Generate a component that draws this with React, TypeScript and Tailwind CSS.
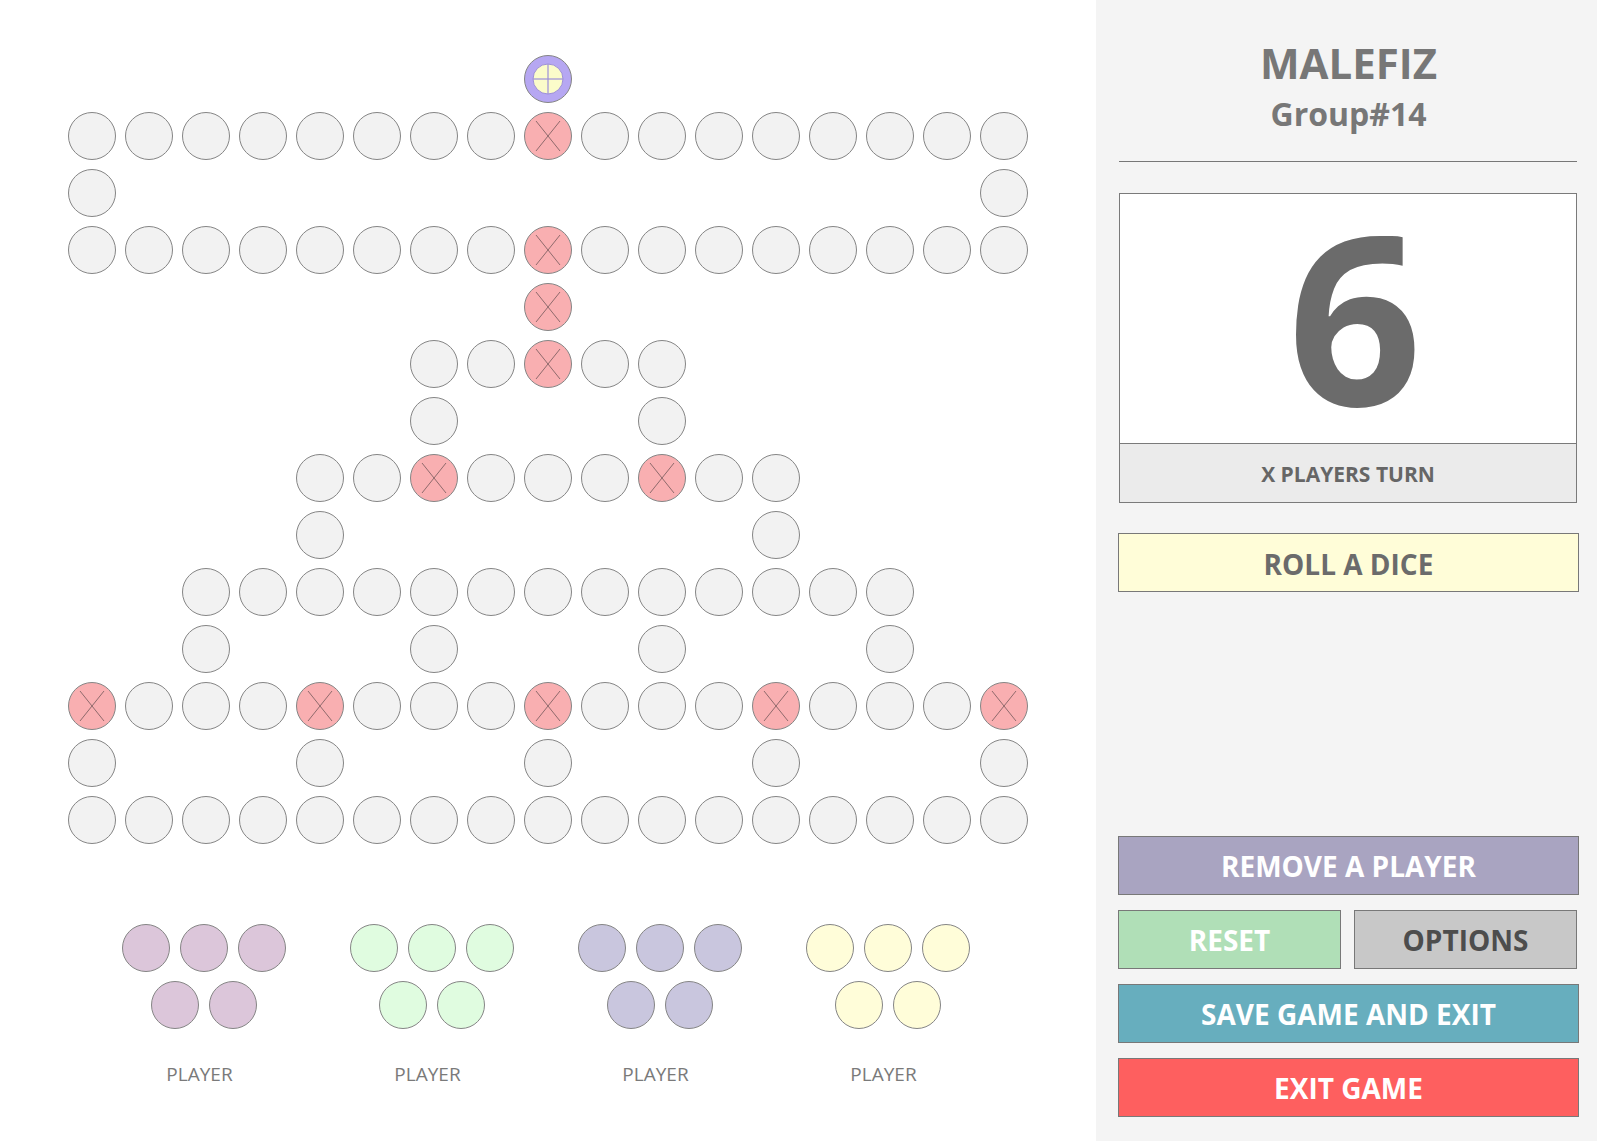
import React from "react";

// board layout, one string per row: . empty, o field, x blocker, G goal
const BOARD = [
  "........G........",
  "ooooooooxoooooooo",
  "o...............o",
  "ooooooooxoooooooo",
  "........x........",
  "......ooxoo......",
  "......o...o......",
  "....ooxoooxoo....",
  "....o.......o....",
  "..ooooooooooooo..",
  "..o...o...o...o..",
  "xoooxoooxoooxooox",
  "o...o...o...o...o",
  "ooooooooooooooooo",
];

const players = [
  { name: "PLAYER", piece: "bg-[#dcc6da]" },
  { name: "PLAYER", piece: "bg-[#e0fce0]" },
  { name: "PLAYER", piece: "bg-[#c9c6de]" },
  { name: "PLAYER", piece: "bg-[#fffdd9]" },
];

const Field = () => (
  <div className="h-12 w-12 rounded-full border border-[#858585] bg-[#f2f2f2]" />
);

const Blocker = () => (
  <div className="h-12 w-12 rounded-full border border-[#858585] bg-[#f9afb1]">
    <svg width="46" height="46" viewBox="0 0 46 46">
      <line x1="11" y1="8" x2="35" y2="38" stroke="#8f6a6c" strokeWidth="1" />
      <line x1="35" y1="8" x2="11" y2="38" stroke="#8f6a6c" strokeWidth="1" />
    </svg>
  </div>
);

const Goal = () => (
  <div className="flex h-12 w-12 items-center justify-center rounded-full border border-[#858585] bg-[#b6a7f2]">
    <svg width="32" height="32" viewBox="0 0 32 32">
      <circle cx="16" cy="16" r="15" fill="#fbfcca" stroke="#9d8fd8" strokeWidth="1" />
      <line x1="16" y1="1" x2="16" y2="31" stroke="#9d8fd8" strokeWidth="1.2" />
      <line x1="1" y1="16" x2="31" y2="16" stroke="#9d8fd8" strokeWidth="1.2" />
    </svg>
  </div>
);

const Cell = ({ kind }: { kind: string }) => {
  if (kind === "o") return <Field />;
  if (kind === "x") return <Blocker />;
  if (kind === "G") return <Goal />;
  return <div />;
};

const Piece = ({ color }: { color: string }) => (
  <div className={`h-12 w-12 rounded-full border border-[#858585] ${color}`} />
);

const PanelButton = ({
  label,
  className,
}: {
  label: string;
  className: string;
}) => (
  <button
    className={`flex h-[59px] items-center justify-center border border-[#787878] text-[28px] font-bold leading-none ${className}`}
  >
    {label}
  </button>
);

export default function App() {
  return (
    <div className="flex h-[1141px] w-full overflow-hidden bg-white font-['Open_Sans',sans-serif]">
      {/* Board */}
      <main className="flex-1 pl-[63px] pt-[50px]">
        <div className="grid grid-cols-[repeat(17,57px)] auto-rows-[57px] place-items-center">
          {BOARD.map((row, r) =>
            row.split("").map((kind, c) => <Cell key={`${r}-${c}`} kind={kind} />)
          )}
        </div>

        {/* Player homes */}
        <div className="ml-[55px] mt-[76px] flex gap-[57px]">
          {players.map((p, i) => (
            <div key={i} className="flex w-[171px] flex-col items-center">
              <div className="flex gap-[10px]">
                <Piece color={p.piece} />
                <Piece color={p.piece} />
                <Piece color={p.piece} />
              </div>
              <div className="mt-[9px] flex gap-[10px]">
                <Piece color={p.piece} />
                <Piece color={p.piece} />
              </div>
              <div className="mr-[8px] mt-[36px] text-[19px] leading-none text-[#7a7a7a]">
                {p.name}
              </div>
            </div>
          ))}
        </div>
      </main>

      {/* Side panel */}
      <aside className="flex w-[501px] flex-col bg-[#f4f4f4] pb-[24px] pl-[22px] pr-[18px]">
        <h1 className="mt-[42px] text-center text-[42px] font-bold leading-none text-[#777777]">
          MALEFIZ
        </h1>
        <h2 className="mt-[14px] text-center text-[32px] font-bold leading-none text-[#777777]">
          Group#14
        </h2>
        <div className="ml-px mr-[2px] mt-[31px] h-px bg-[#777777]" />

        <div className="ml-px mr-[2px] mt-[31px] border border-[#7a7a7a] bg-white">
          <div className="flex h-[249px] items-center justify-center pl-[14px]">
            <span className="-mt-2 text-[235px] font-bold leading-[200px] text-[#6b6b6b]">
              6
            </span>
          </div>
          <div className="flex h-[59px] items-center justify-center border-t border-[#7a7a7a] bg-[#ebebeb] pt-[3px] text-[21px] font-bold leading-none text-[#666666]">
            X PLAYERS TURN
          </div>
        </div>

        <PanelButton
          label="ROLL A DICE"
          className="mt-[30px] bg-[#fffdd8] pt-[2px] text-[#6b6b6b]"
        />

        <div className="flex-1" />

        <PanelButton label="REMOVE A PLAYER" className="bg-[#a9a4c1] text-white" />
        <div className="mt-[15px] flex gap-[13px]">
          <PanelButton label="RESET" className="flex-1 bg-[#b0dfb7] text-white" />
          <PanelButton label="OPTIONS" className="mr-[2px] flex-1 bg-[#c8c8c8] text-[#4d4d4d]" />
        </div>
        <PanelButton label="SAVE GAME AND EXIT" className="mt-[15px] bg-[#67aebe] text-white" />
        <PanelButton label="EXIT GAME" className="mt-[15px] bg-[#fe5f5f] text-white" />
      </aside>
    </div>
  );
}
